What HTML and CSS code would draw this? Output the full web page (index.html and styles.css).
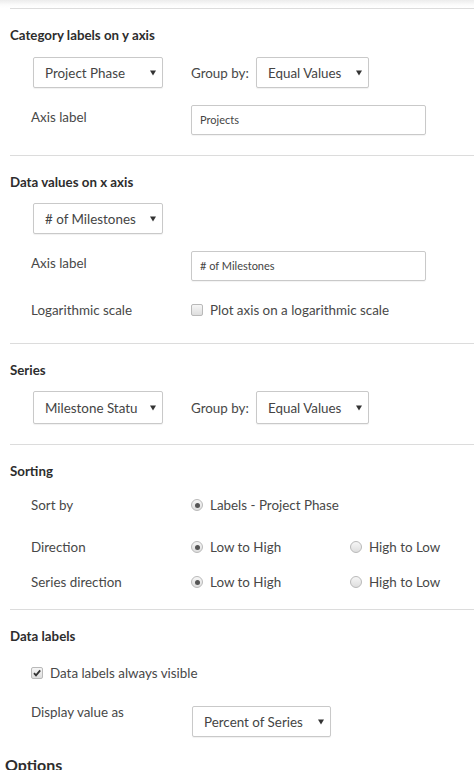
FILE: index.html
```html
<!DOCTYPE html>
<html>
<head>
<meta charset="utf-8">
<link rel="stylesheet" href="styles.css">
</head>
<body>
<div class="shade"></div>
<div class="panel">
  <section class="section s1">
    <h2 class="title">Category labels on y axis</h2>
    <div class="selrow">
      <div class="select w130"><span class="val">Project Phase</span><svg class="arrow" viewBox="0 0 6 6"><path d="M0 0.5H6L3 5.5Z"/></svg></div>
      <span class="groupby">Group by:</span>
      <div class="select w113"><span class="val">Equal Values</span><svg class="arrow" viewBox="0 0 6 6"><path d="M0 0.5H6L3 5.5Z"/></svg></div>
    </div>
    <div class="row r-input">
      <span class="label lab-input">Axis label</span>
      <div class="input">Projects</div>
    </div>
  </section>

  <section class="section s2">
    <h2 class="title">Data values on x axis</h2>
    <div class="selrow sr2">
      <div class="select w130"><span class="val">#&nbsp;of Milestones</span><svg class="arrow" viewBox="0 0 6 6"><path d="M0 0.5H6L3 5.5Z"/></svg></div>
    </div>
    <div class="row r-input">
      <span class="label lab-input">Axis label</span>
      <div class="input">#&nbsp;of Milestones</div>
    </div>
    <div class="row r-log">
      <span class="label">Logarithmic scale</span>
      <span class="opt"><span class="check"></span>Plot axis on a logarithmic scale</span>
    </div>
  </section>

  <section class="section s3">
    <h2 class="title">Series</h2>
    <div class="selrow sr3">
      <div class="select w130 h32"><span class="val">Milestone Statu</span><svg class="arrow" viewBox="0 0 6 6"><path d="M0 0.5H6L3 5.5Z"/></svg></div>
      <span class="groupby">Group by:</span>
      <div class="select w113 h32"><span class="val">Equal Values</span><svg class="arrow" viewBox="0 0 6 6"><path d="M0 0.5H6L3 5.5Z"/></svg></div>
    </div>
  </section>

  <section class="section s4">
    <h2 class="title">Sorting</h2>
    <div class="row r-sort">
      <span class="label">Sort by</span>
      <span class="opt"><span class="radio on"></span>Labels - Project Phase</span>
    </div>
    <div class="row r-dir">
      <span class="label">Direction</span>
      <span class="opt o1"><span class="radio on"></span>Low to High</span>
      <span class="opt"><span class="radio"></span>High to Low</span>
    </div>
    <div class="row r-sdir">
      <span class="label">Series direction</span>
      <span class="opt o1"><span class="radio on"></span>Low to High</span>
      <span class="opt"><span class="radio"></span>High to Low</span>
    </div>
  </section>

  <section class="section s5">
    <h2 class="title">Data labels</h2>
    <div class="row r-dl">
      <span class="opt dl"><span class="check on"><svg viewBox="0 0 12 12"><path d="M3 6.2L5 8.4L9.2 3.4" fill="none" stroke="#333" stroke-width="1.8"/></svg></span>Data labels always visible</span>
    </div>
    <div class="row r-disp">
      <span class="label lab-disp">Display value as</span>
      <div class="select w139"><span class="val">Percent of Series</span><svg class="arrow" viewBox="0 0 6 6"><path d="M0 0.5H6L3 5.5Z"/></svg></div>
    </div>
  </section>
</div>
<h1 class="options">Options</h1>
</body>
</html>
```
FILE: styles.css
```css
html, body {
  margin: 0;
  padding: 0;
}
body {
  width: 474px;
  height: 770px;
  overflow: hidden;
  background: #fff;
  font-family: Lato, "Open Sans", sans-serif;
  font-size: 13.4px;
  color: #484848;
}
.shade {
  height: 8px;
  background: linear-gradient(#ececec, #fbfbfb 60%, #fff);
}
.panel {
  padding-left: 10px;
}
.section {
  border-top: 1px solid #dcdcdc;
  padding-top: 18px;
}
.title {
  margin: 0;
  font-size: 13.3px;
  font-weight: 700;
  line-height: 16px;
  color: #2d2d2d;
}
.s1 { padding-bottom: 20px; }
.s2 { padding-bottom: 25px; }
.s3 { padding-bottom: 20px; }
.s4 { padding-bottom: 19px; }
.s5 { padding-bottom: 0; }

.selrow {
  display: flex;
  align-items: center;
  margin-top: 14px;
  padding-left: 23px;
}
.sr2, .sr3 { margin-top: 13px; }
.groupby {
  width: 65px;
  margin-left: 28px;
  line-height: 16px;
  white-space: nowrap;
}
.select {
  box-sizing: border-box;
  height: 31px;
  display: flex;
  align-items: center;
  border: 1px solid #c9c9c9;
  border-radius: 2px;
  background: #fff;
  box-shadow: 0 1px 1px rgba(0,0,0,0.06);
  padding: 0 6px 0 11px;
  color: #444;
}
.h32 { height: 33px; }
.w130 { width: 130px; }
.w113 { width: 113px; }
.w139 { width: 139px; }
.val {
  flex: 1;
  white-space: nowrap;
  overflow: hidden;
  margin-right: 6px;
}
.arrow {
  width: 6px;
  height: 6px;
  fill: #333;
  flex: none;
}
.row {
  display: flex;
  align-items: flex-start;
  padding-left: 21px;
  line-height: 16px;
}
.label {
  width: 160px;
  flex: none;
}
.lab-input { padding-top: 4px; }
.r-input { margin-top: 17px; }
.r-log { margin-top: 21px; }
.input {
  box-sizing: border-box;
  width: 235px;
  height: 30px;
  border: 1px solid #c9c9c9;
  border-radius: 2px;
  padding-left: 8px;
  font-size: 11px;
  line-height: 28px;
  color: #444;
  box-shadow: 0 1px 1px rgba(0,0,0,0.05);
}
.opt {
  display: flex;
  align-items: center;
  white-space: nowrap;
}
.o1 { width: 159px; }
.check, .radio {
  box-sizing: border-box;
  width: 12px;
  height: 12px;
  margin-right: 7px;
  border: 1px solid #b9b9b9;
  background: linear-gradient(#f6f6f6, #dedede);
  flex: none;
  position: relative;
}
.check { border-radius: 2px; }
.check svg {
  position: absolute;
  left: -1px;
  top: -1px;
  width: 12px;
  height: 12px;
}
.radio { border-radius: 50%; }
.radio.on::after {
  content: "";
  position: absolute;
  left: 2.5px;
  top: 2.5px;
  width: 5px;
  height: 5px;
  border-radius: 50%;
  background: #555;
}
.r-sort { margin-top: 18px; }
.r-dir { margin-top: 26px; }
.r-sdir { margin-top: 19px; }
.r-dl { margin-top: 21px; }
.r-disp { margin-top: 25px; }
.lab-disp { margin-top: -2px; width: 161px; }
.options {
  margin: 19px 0 0 5px;
  font-size: 16px;
  font-weight: 700;
  line-height: 18px;
  color: #2d2d2d;
}
```
